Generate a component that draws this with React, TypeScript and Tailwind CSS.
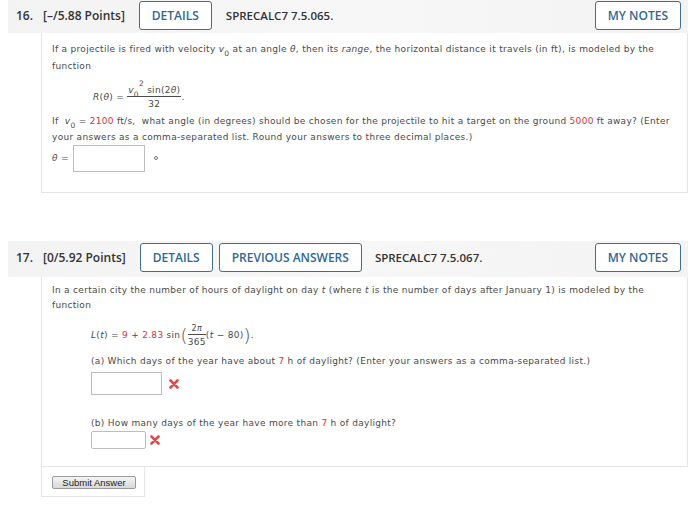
import React from 'react';

const btn =
  "h-[29px] rounded-[3px] border-[1.5px] border-[#3f6e8e] bg-white px-[12px] text-[12px] font-semibold text-[#2f6893] leading-none flex items-center";

function XMark() {
  return (
    <svg width="10" height="10" viewBox="0 0 10 10" className="shrink-0">
      <path d="M1.5 1.5 L8.5 8.5 M8.5 1.5 L1.5 8.5" stroke="#e04a4f" strokeWidth="2.6" strokeLinecap="round" />
    </svg>
  );
}

function V0() {
  return (
    <span>
      <i>v</i>
      <sub className="text-[7.5px] align-[-2px]">0</sub>
    </span>
  );
}

export default function App() {
  return (
    <div className="h-[518px] w-[700px] overflow-hidden bg-white font-['Open_Sans',sans-serif]">
      <div className="ml-2 w-[680px]">
        {/* question 16 */}
        <div className="flex h-[33px] items-start bg-gradient-to-r from-[#f3f3f3] via-[#f7f7f7] to-[#f3f3f3] pl-2 pr-[7px] pt-[1px] text-[#333]">
          <div className="flex h-[29px] items-center text-[12px] font-semibold">
            <span className="w-[27px]">16.</span>
            <span>[–/5.88 Points]</span>
          </div>
          <button className={btn + " ml-[14px]"}>DETAILS</button>
          <div className="ml-[14px] flex h-[29px] items-center text-[11.5px] font-semibold">SPRECALC7 7.5.065.</div>
          <button className={btn + " ml-auto"}>MY NOTES</button>
        </div>
        <div className="ml-[33px] h-[160px] border-x border-b border-[#e6e6e6] pl-[10px] pt-[8px] font-['DejaVu_Sans',sans-serif] text-[9px] leading-[17px] tracking-[0.3px] text-[#4a4a4a]">
          <p>
            If a projectile is fired with velocity <V0 /> at an angle <i>θ</i>, then its <i>range</i>, the horizontal distance it travels (in ft), is modeled by the
          </p>
          <p>function</p>
          <div className="ml-[41px] mt-[10px] flex items-center">
            <span>
              <i>R</i>(<i>θ</i>) =&nbsp;
            </span>
            <span className="inline-flex flex-col items-center leading-[11px]">
              <span className="px-[1px]">
                <i>v</i>
                <sub className="text-[7.5px] align-[-2px]">0</sub>
                <sup className="text-[7.5px] align-[3px]">2</sup> sin(2<i>θ</i>)
              </span>
              <span className="h-px w-full bg-[#4a4a4a]" />
              <span className="mt-[2px]">32</span>
            </span>
            <span>.</span>
          </div>
          <p className="mt-[3px]">
            If&nbsp; <V0 /> = <span className="text-[#d0363b]">2100</span> ft/s,&nbsp; what angle (in degrees) should be chosen for the projectile to hit a target on the ground <span className="text-[#d0363b]">5000</span> ft away? (Enter
          </p>
          <p className="leading-[15px]">your answers as a comma-separated list. Round your answers to three decimal places.)</p>
          <div className="mt-[0px] flex items-center">
            <span className="w-[21px]">
              <i>θ</i> =
            </span>
            <div className="h-[27px] w-[72px] border border-[#bdbdbd] bg-white" />
            <span className="ml-[9px] mb-[2px] h-[4px] w-[4px] rounded-full border border-[#777]" />
          </div>
        </div>

        {/* question 17 */}
        <div className="mt-[48px] flex h-[36px] items-start bg-gradient-to-r from-[#f3f3f3] via-[#f7f7f7] to-[#f3f3f3] pl-2 pr-[7px] pt-[2px] text-[#333]">
          <div className="flex h-[29px] items-center text-[12px] font-semibold">
            <span className="w-[27px]">17.</span>
            <span>[0/5.92 Points]</span>
          </div>
          <button className={btn + " ml-[14px]"}>DETAILS</button>
          <button className={btn + " ml-[6px] text-[11.7px]"}>PREVIOUS ANSWERS</button>
          <div className="ml-[13px] flex h-[29px] items-center text-[11.5px] font-semibold">SPRECALC7 7.5.067.</div>
          <button className={btn + " ml-auto"}>MY NOTES</button>
        </div>
        <div className="ml-[33px] h-[190px] border-x border-b border-[#e6e6e6] pl-[10px] pt-[6px] font-['DejaVu_Sans',sans-serif] text-[9px] leading-[15px] tracking-[0.3px] text-[#4a4a4a]">
          <p>
            In a certain city the number of hours of daylight on day <i>t</i> (where <i>t</i> is the number of days after January 1) is modeled by the
          </p>
          <p>function</p>
          <div className="ml-[39px] mt-[11px] flex items-center">
            <span>
              <i>L</i>(<i>t</i>) = <span className="text-[#d0363b]">9</span> + <span className="text-[#d0363b]">2.83</span> sin
            </span>
            <span className="text-[18px] leading-none font-light">(</span>
            <span className="inline-flex flex-col items-center leading-[10px]">
              <span className="text-[8px]">
                2<i>π</i>
              </span>
              <span className="h-px w-[18px] bg-[#4a4a4a]" />
              <span className="mt-[2px]">365</span>
            </span>
            <span>
              (<i>t</i> − 80)
            </span>
            <span className="text-[18px] leading-none font-light">)</span>
            <span>.</span>
          </div>
          <div className="ml-[39px]">
            <p className="mt-[7px]">
              (a) Which days of the year have about <span className="text-[#d0363b]">7</span> h of daylight? (Enter your answers as a comma-separated list.)
            </p>
            <div className="mt-[3px] flex items-center">
              <div className="h-[23px] w-[71px] border border-[#bdbdbd] bg-white" />
              <span className="ml-[7px]">
                <XMark />
              </span>
            </div>
            <p className="mt-[21px]">
              (b) How many days of the year have more than <span className="text-[#d0363b]">7</span> h of daylight?
            </p>
            <div className="mt-[0px] flex items-center">
              <div className="h-[18px] w-[55px] rounded-[2px] border border-[#bdbdbd] bg-white" />
              <span className="ml-[4px]">
                <XMark />
              </span>
            </div>
          </div>
        </div>
        <div className="ml-[33px] h-[30px] w-[104px] border-x border-b border-[#e6e6e6] pl-[10px] pt-[9px]">
          <button className="flex h-[13px] w-[84px] items-center justify-center rounded-[2px] border border-[#9a9a9a] bg-gradient-to-b from-[#f4f4f4] to-[#d9d9d9] font-['Liberation_Sans',sans-serif] text-[9.5px] leading-none text-[#222]">
            Submit Answer
          </button>
        </div>
      </div>
    </div>
  );
}
